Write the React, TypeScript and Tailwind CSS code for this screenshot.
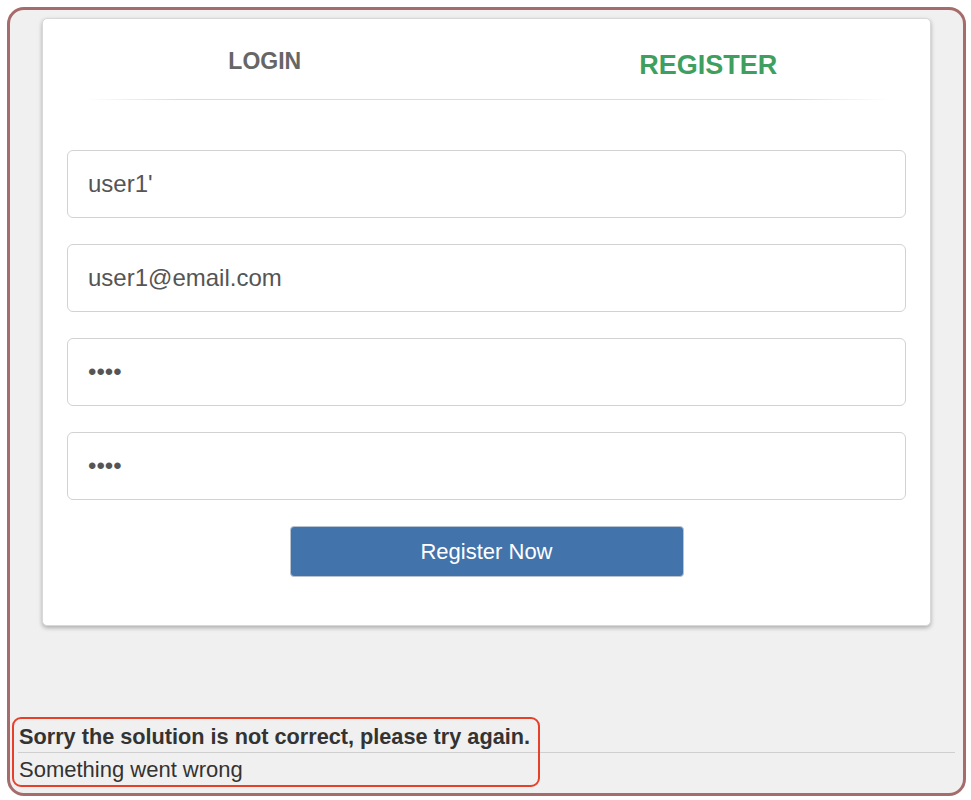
import React from 'react'

const fieldClass =
  'h-[68px] w-full rounded-[6px] border border-[#d2d2d2] bg-white px-5 text-[24px] text-[#555] outline-none'

export default function App() {
  return (
    <div className="min-h-screen bg-white pt-[7px] pl-[7px] pr-[5px]" style={{ fontFamily: '"Liberation Sans", Arial, sans-serif' }}>
      <div className="flex h-[789px] flex-col rounded-[17px] border-[3px] border-[#a66c6c] bg-[#f0f0f0]">
        {/* Card */}
        <div className="mx-8 mt-2 rounded-[5px] border border-[#d8d8d8] bg-white px-[24px] pb-[48px] shadow-[0_2px_4px_rgba(0,0,0,0.28)]">
          <div className="-mx-[24px] grid h-[80px] grid-cols-2">
            <div className="flex justify-center pt-[31px]">
              <span className="text-[23px] font-bold leading-none text-[#666]">LOGIN</span>
            </div>
            <div className="flex justify-center pt-[33px]">
              <span className="text-[27px] font-bold leading-none text-[#3f9f60]">REGISTER</span>
            </div>
          </div>
          <div className="mx-[18px] h-px bg-[linear-gradient(to_right,transparent,#dcdcdc_12%,#dcdcdc_88%,transparent)]" />

          <form className="mt-[50px] flex flex-col gap-[26px]" onSubmit={e => e.preventDefault()}>
            <input className={fieldClass} defaultValue="user1'" />
            <input className={fieldClass} defaultValue="user1@email.com" />
            <input className={fieldClass} type="password" defaultValue="1234" />
            <input className={fieldClass} type="password" defaultValue="1234" />
            <div className="flex justify-center">
              <button
                type="submit"
                className="h-[51px] w-[394px] rounded-[4px] border border-[#b9c3cf] bg-[#4273ab] text-[22px] text-white"
              >
                Register Now
              </button>
            </div>
          </form>
        </div>

        <div className="flex-1" />

        {/* Result message */}
        <div className="relative px-2 pb-[9px]">
          <div className="mb-[2px] pl-px text-[21.7px] font-bold leading-[26px] text-[#333]">
            Sorry the solution is not correct, please try again.
          </div>
          <div className="h-px bg-[#cfcfcf]" />
          <div className="mt-[3px] pl-px text-[22px] leading-[28px] text-[#333]">Something went wrong</div>
          <div className="pointer-events-none absolute left-[2px] top-[-7px] h-[70px] w-[528px] rounded-[9px] border-2 border-[#e6402a]" />
        </div>
      </div>
    </div>
  )
}
